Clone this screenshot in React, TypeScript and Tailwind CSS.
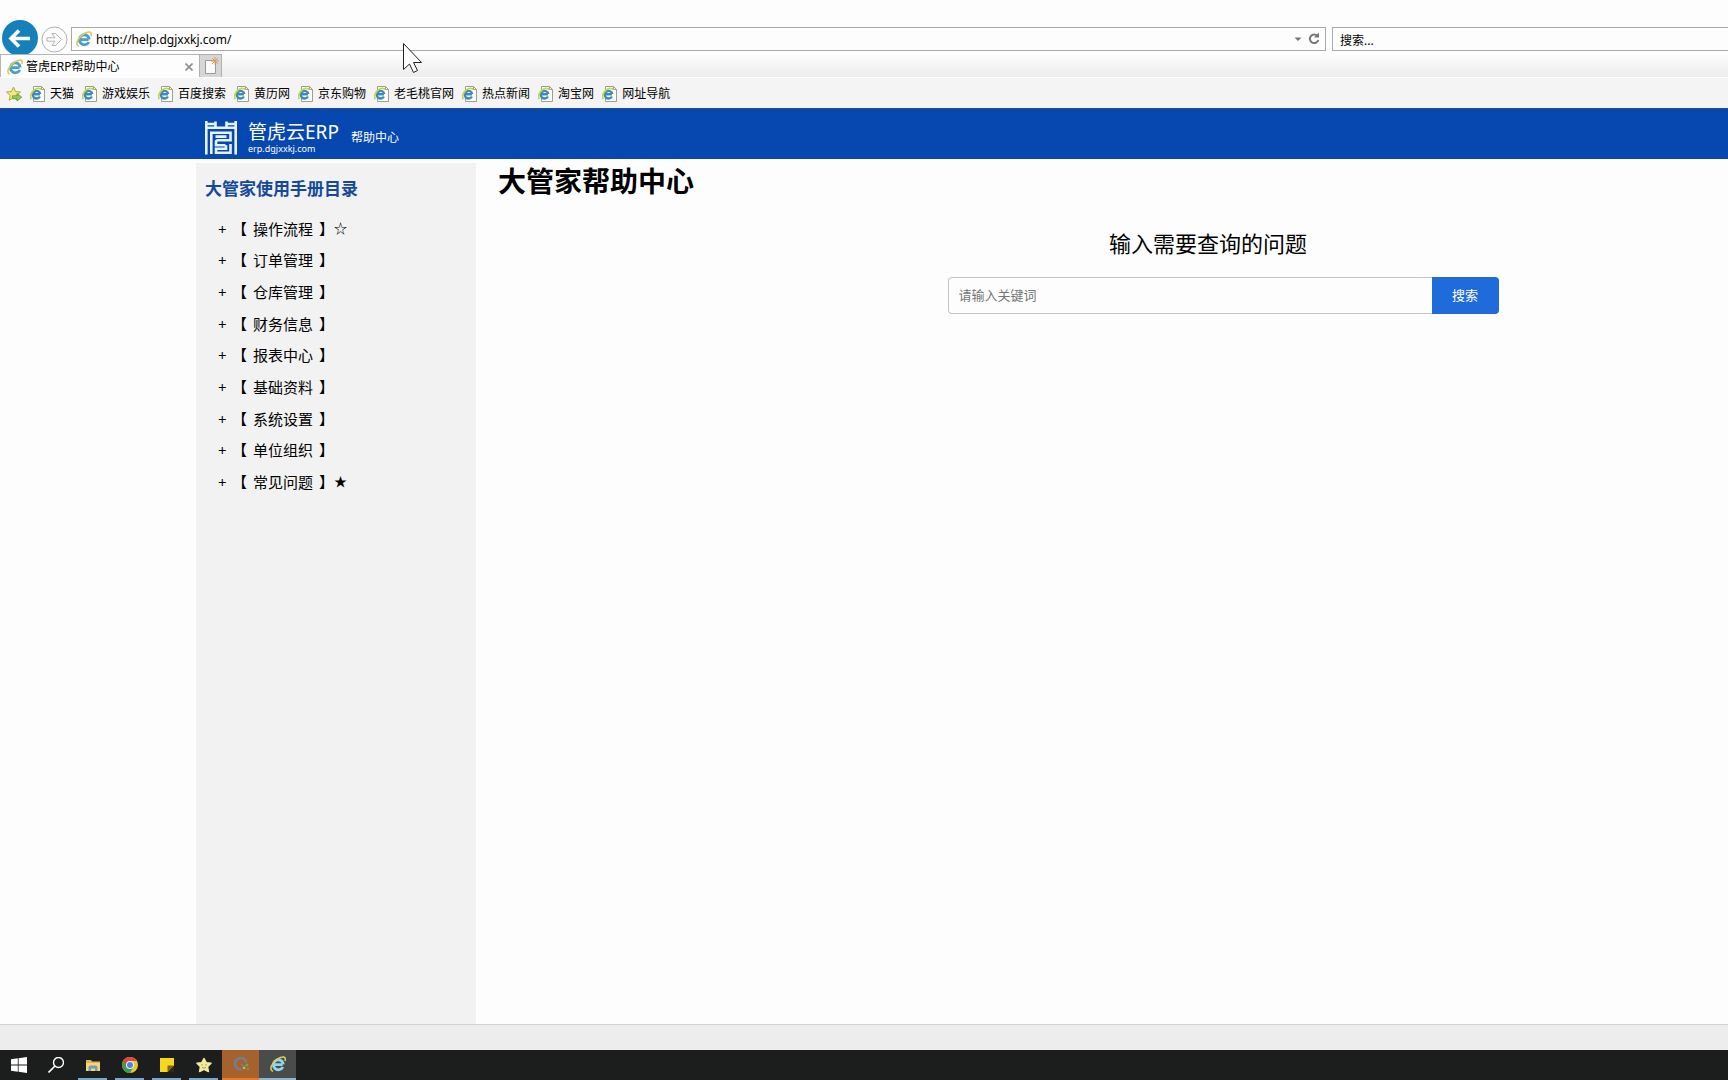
import React, { useState } from 'react';

const BOOKMARKS = ['天猫', '游戏娱乐', '百度搜索', '黄历网', '京东购物', '老毛桃官网', '热点新闻', '淘宝网', '网址导航'];

const MENU = [
  { name: '操作流程', mark: '☆' },
  { name: '订单管理' },
  { name: '仓库管理' },
  { name: '财务信息' },
  { name: '报表中心' },
  { name: '基础资料' },
  { name: '系统设置' },
  { name: '单位组织' },
  { name: '常见问题', mark: '★' },
];

export default function App() {
  return (
    <div className="relative flex min-h-screen flex-col overflow-hidden bg-[#fdfdfd] font-['Noto_Sans','Noto_Sans_CJK_SC',sans-serif] text-black">
      <BrowserChrome />
      <SiteHeader />
      <div className="flex flex-1 pl-[196px]">
        <Sidebar />
        <HelpCenter />
      </div>
      <div className="h-[26px] border-t border-[#d2d2d2] bg-[#ededed]" />
      <Taskbar />
      <MousePointer />
    </div>
  );
}

function BrowserChrome() {
  const [url, setUrl] = useState('http://help.dgjxxkj.com/');

  return (
    <div>
      {/* Address bar */}
      <div className="flex h-[54px] pt-5 pl-[2px]">
        <button aria-label="后退" className="h-9 w-9">
          <BackIcon />
        </button>
        <button aria-label="前进" className="mt-[6px] ml-[3px] h-[27px] w-[27px]">
          <ForwardIcon />
        </button>
        <div className="mt-[7px] ml-[3px] flex h-6 w-[1255px] shrink items-center border border-[#a9a9a9] bg-[#fdfdfd] pr-[3px] pl-1">
          <IeIcon className="h-4 w-4 shrink-0" />
          <input
            aria-label="地址"
            value={url}
            onChange={(e) => setUrl(e.target.value)}
            className="ml-1 min-w-0 flex-1 bg-transparent pt-[2px] text-xs outline-none"
          />
          <button aria-label="历史" className="mr-1 h-4 w-2">
            <svg viewBox="0 0 8 16" className="h-4 w-2"><path d="M0.5 6.500h7L4 10z" fill="#777" /></svg>
          </button>
          <button aria-label="刷新" className="h-4 w-4">
            <RefreshIcon />
          </button>
        </div>
        <input
          aria-label="搜索"
          placeholder="搜索..."
          className="mt-[7px] ml-[6px] h-6 min-w-0 flex-1 border border-r-0 border-[#a9a9a9] bg-[#fdfdfd] px-[7px] pt-[2px] text-xs outline-none placeholder:text-black"
        />
      </div>

      {/* Tabs */}
      <div className="relative flex h-[23px] bg-linear-to-b from-[#fdfdfd] to-[#ececec]">
        <div className="flex w-[199px] items-center border-t border-l border-[#b5b5b5] bg-[#fdfdfd] pt-[2px] pr-[6px] pl-[6px] text-xs">
          <IeIcon className="h-4 w-4 shrink-0" />
          <span className="ml-[3px] flex-1">管虎ERP帮助中心</span>
          <button aria-label="关闭标签页" className="h-2 w-2">
            <svg viewBox="0 0 8 8" className="h-2 w-2"><path d="M0.5 0.5l7 7M7.5 0.5l-7 7" stroke="#8b8b8b" strokeWidth="1.6" /></svg>
          </button>
        </div>
        <button aria-label="新建标签页" className="flex w-[23px] justify-center border border-b-0 border-[#b0b0b0] bg-[#d6d6d6] pt-[2px]">
          <NewTabIcon />
        </button>
      </div>

      {/* Favorites */}
      <nav className="flex h-[31px] items-center gap-2 border-t border-white bg-[#f4f4f5] pt-[2px] pl-[6px] text-xs">
        <button aria-label="添加到收藏夹" className="h-4 w-4">
          <FavoriteIcon />
        </button>
        {BOOKMARKS.map((name) => (
          <a key={name} href="#" className="flex items-center gap-1 whitespace-nowrap">
            <PageIcon />
            {name}
          </a>
        ))}
      </nav>
    </div>
  );
}

function SiteHeader() {
  return (
    <header className="flex h-[51px] items-center border-t border-[#2c4f86] bg-[#0648b0] pt-2 pl-[204px] text-white">
      <LogoIcon />
      <div className="ml-[10px]">
        <div className="text-[19px] leading-5">管虎云ERP</div>
        <div className="pt-[1px] text-[9px] leading-3">erp.dgjxxkj.com</div>
      </div>
      <span className="ml-3 text-xs">帮助中心</span>
    </header>
  );
}

function Sidebar() {
  return (
    <aside className="mt-1 w-[280px] bg-[#f2f2f2] pt-3">
      <h2 className="pl-[9px] text-[17px] leading-7 font-bold text-[#15499a]">大管家使用手册目录</h2>
      <ul className="mt-[10px] grid h-[285px] grid-rows-9 pl-[22px] text-[15px]">
        {MENU.map((item) => (
          <li key={item.name} className="flex items-center">
            <button className="flex items-center">
              <span className="w-[14px] text-left">+</span>
              <span className="flex gap-[6px]">
                <span>【</span>
                <span>{item.name}</span>
                <span>】</span>
              </span>
              {item.mark && <span className="text-[13px]">{item.mark}</span>}
            </button>
          </li>
        ))}
      </ul>
    </aside>
  );
}

function HelpCenter() {
  const [keyword, setKeyword] = useState('');

  return (
    <main className="flex-1 pl-[22px]">
      <h1 className="pt-1 text-[28px] leading-9 font-bold">大管家帮助中心</h1>
      <form className="flex flex-col items-center pt-7 pl-[190px]" onSubmit={(e) => e.preventDefault()}>
        <label htmlFor="keyword" className="text-[22px] leading-8">输入需要查询的问题</label>
        <div className="mt-[18px] flex h-[37px] pl-[30px] text-[13px]">
          <input
            id="keyword"
            value={keyword}
            onChange={(e) => setKeyword(e.target.value)}
            placeholder="请输入关键词"
            className="w-[484px] rounded-l border border-r-0 border-[#c4c4c4] bg-[#fdfdfd] px-[10px] outline-none placeholder:text-[#757575]"
          />
          <button type="submit" className="w-[67px] rounded-r bg-[#1f6bdc] text-white">搜索</button>
        </div>
      </form>
    </main>
  );
}

function Taskbar() {
  return (
    <footer className="flex h-[30px] bg-[#1c1e1d]">
      <TaskButton label="开始">
        <path d="M0 2.3L6.8 1.3V7.6H0zM7.6 1.2L16 0V7.6H7.6zM0 8.4H6.8V14.7L0 13.7zM7.6 8.4H16V16L7.6 14.8z" fill="#fff" />
      </TaskButton>
      <TaskButton label="搜索">
        <circle cx="10.5" cy="5.5" r="5" fill="none" stroke="#fff" strokeWidth="1.4" />
        <path d="M7 9L0.5 15.5" stroke="#fff" strokeWidth="1.6" />
      </TaskButton>
      <TaskButton label="文件资源管理器" running>
        <path d="M1 3h5l1 1.500h8V14H1z" fill="#e2b450" />
        <path d="M1 6h14v8H1z" fill="#f5d57c" />
        <path d="M3.500 14v-3.500a2 2 0 0 1 2-2h5a2 2 0 0 1 2 2V14h-2.500v-2.500H6V14z" fill="#6f9fb5" />
      </TaskButton>
      <TaskButton label="Chrome" running>
        <circle cx="8" cy="8" r="8" fill="#e8c63a" />
        <path d="M8 8L1.100 4A8 8 0 0 0 8 16l3.500-6z" fill="#3f9a52" />
        <path d="M8 4h6.900A8 8 0 0 0 1.100 4l3.400 6z" fill="#d94a3d" />
        <circle cx="8" cy="8" r="4" fill="#f4f4f4" />
        <circle cx="8" cy="8" r="3" fill="#4a84d8" />
      </TaskButton>
      <TaskButton label="便笺" running>
        <path d="M1 1h14v8l-6 6H1z" fill="#f7d61e" />
        <path d="M15 8.500V15H8.500z" fill="#2e2a14" />
        <path d="M8.500 8.500H15L8.500 15z" fill="#7a6a1c" />
      </TaskButton>
      <TaskButton label="收藏" running>
        <path d="M8 1.500l2.200 4.200 4.800.6-3.500 3.400.9 4.800L8 12.400l-4.400 2.100.9-4.800L1 6.300l4.800-.6z" fill="#f1ec9c" stroke="#f1ec9c" strokeWidth="1.500" strokeLinejoin="round" />
        <path d="M6 7v1.500M10 7v1.500M6 10.500q2 1.200 4 0" stroke="#8f8a42" fill="none" strokeWidth=".8" />
      </TaskButton>
      <TaskButton label="录屏" className="border-b-2 border-[#e8792a] bg-[#a5622c]">
        <path d="M8.500 13.300A5.700 5.700 0 1 1 13.300 6.500" fill="none" stroke="#6f8190" strokeWidth="2.600" />
        <path d="M7.500 8.500q2.500 0 5.500 4.500" fill="none" stroke="#6f8190" strokeWidth="2" />
        <circle cx="13.800" cy="9" r="1.500" fill="#6ea84a" />
        <circle cx="11" cy="12" r="1.300" fill="#d9b13a" />
        <circle cx="15" cy="13" r="1" fill="#6ea84a" />
      </TaskButton>
      <button aria-label="Internet Explorer" className="flex w-[37px] items-center justify-center border-b-2 border-[#8ab6d6] bg-[#4a4c4b]">
        <IeIcon className="h-4 w-4" light />
      </button>
    </footer>
  );
}

interface TaskButtonProps {
  label: string;
  running?: boolean;
  className?: string;
  children: React.ReactNode;
}

function TaskButton({ label, running, className = '', children }: TaskButtonProps) {
  return (
    <button aria-label={label} className={`relative flex w-[37px] items-center justify-center ${className}`}>
      <svg viewBox="0 0 16 16" className="h-4 w-4">{children}</svg>
      {running && <span className="absolute inset-x-1 bottom-0 h-[2px] bg-[#76a9cf]" />}
    </button>
  );
}

function IeIcon({ className, light }: { className: string; light?: boolean }) {
  return (
    <svg viewBox="0 0 16 16" className={className}>
      <path d="M3.800 8.600h8.800M12.900 11A5 5 0 1 1 13.400 8.300" fill="none" stroke={light ? '#8ed6f3' : '#4a9fd0'} strokeWidth="2.800" />
      <path d="M3 15.200C-1.800 14 2.500 6 7.500 3S16.500.3 15 5" fill="none" stroke="#dccb4e" strokeWidth="1.600" />
    </svg>
  );
}

function PageIcon() {
  return (
    <svg viewBox="0 0 16 16" className="h-4 w-4 shrink-0">
      <path d="M3.500.5h8l3 3v12h-11z" fill="#fff" stroke="#a39b8b" />
      <path d="M11.500.5v3h3" fill="none" stroke="#a39b8b" />
      <path d="M3 8.300h7M9.900 10.500A3.800 3.800 0 1 1 10.300 8" fill="none" stroke="#3b8bbb" strokeWidth="2.400" />
      <path d="M1.500 13C-.8 11 1.500 5.500 4.500 3.700s6-1.700 6.500.3" fill="none" stroke="#c3d650" strokeWidth="1.800" />
    </svg>
  );
}

function BackIcon() {
  return (
    <svg viewBox="0 0 36 36" className="h-9 w-9">
      <circle cx="18" cy="18" r="18" fill="#1580b9" />
      <path d="M28 18.500H9.500M17 10.500L9 18.500l8 8" fill="none" stroke="#fff" strokeWidth="3.600" />
    </svg>
  );
}

function ForwardIcon() {
  return (
    <svg viewBox="0 0 27 27" className="h-[27px] w-[27px]">
      <circle cx="13.500" cy="13.500" r="12.500" fill="#fdfdfd" stroke="#b0b0b0" />
      <path d="M6 11.800h8l-3-4.300h3.500l6 6-6 6H11l3-4.300H6z" fill="#fff" stroke="#b0b0b0" />
    </svg>
  );
}

function RefreshIcon() {
  return (
    <svg viewBox="0 0 16 16" className="h-4 w-4">
      <path d="M11.500 5A4.300 4.300 0 1 0 12.300 9" fill="none" stroke="#777" strokeWidth="2" />
      <path d="M8 6.500h5V1.500z" fill="#777" />
    </svg>
  );
}

function NewTabIcon() {
  return (
    <svg viewBox="0 0 16 18" className="h-[18px] w-4">
      <path d="M2.500 3.500h10v13h-10z" fill="#fafafa" stroke="#9b9b9b" />
      <path d="M12 0v8M8 4h8M9.200 1.200l5.600 5.600M14.800 1.200L9.200 6.800" stroke="#dd9f52" />
    </svg>
  );
}

function FavoriteIcon() {
  return (
    <svg viewBox="0 0 16 16" className="h-4 w-4">
      <path d="M7.500 1l2 4.500 5 .5-3.700 3.300 1 5-4.300-2.600-4.300 2.600 1-5L.5 6l5-.5z" fill="#f6e97c" stroke="#b8a53a" />
      <path d="M6.500 9.800H11V7.500l4.700 3.700L11 15v-2.300H6.500z" fill="#8fce57" stroke="#5b9c37" strokeWidth=".8" />
    </svg>
  );
}

function LogoIcon() {
  return (
    <svg viewBox="0 0 34 34" className="h-[34px] w-[34px]" fill="none" stroke="#e6f3fb" strokeWidth="2.600">
      {/* gate posts and roof */}
      <path d="M2.300 0v33.500M31.700 0v33.500M2 3h9.500M22.500 3H32M11.500.5v7M22.500.5v7M2 6.800h30" />
      {/* winding inner stroke */}
      <path d="M7.300 33V11.800h19.200v7.500H14q-2 0-2 2v3h9.500" />
      <path d="M11.500 15.600h11M22 24.300v3.500H12v4h14.500V23" />
    </svg>
  );
}

function MousePointer() {
  return (
    <svg viewBox="0 0 20 31" className="absolute top-[43px] left-[403px] h-[31px] w-5">
      <path d="M.5.500v26l6-5.500 4 8.500 4-2-4-8h8z" fill="#fff" stroke="#222" />
    </svg>
  );
}
